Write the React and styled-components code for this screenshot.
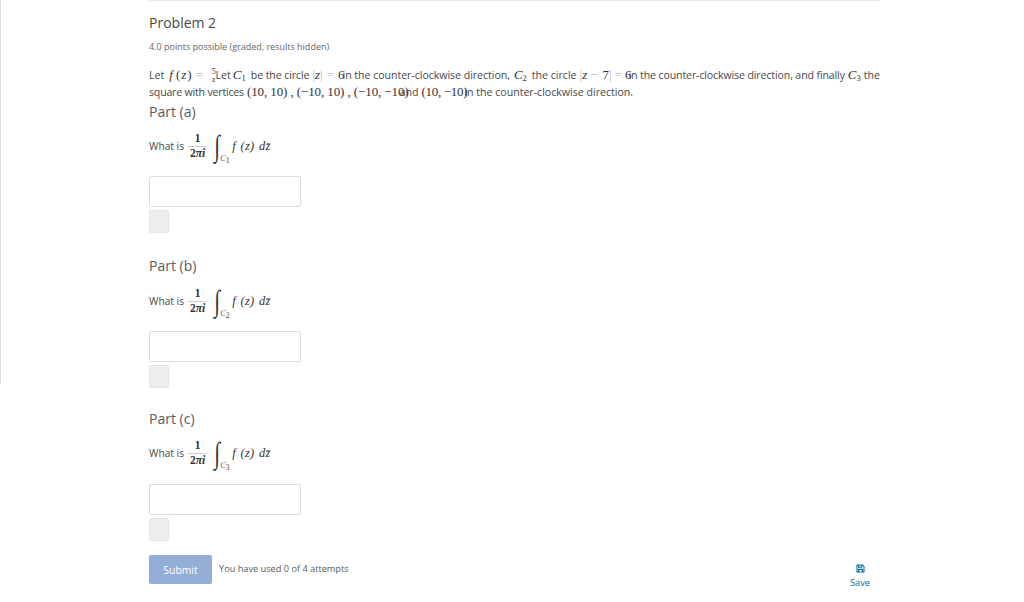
import React from "react";
import styled, { createGlobalStyle } from "styled-components";

const Global = createGlobalStyle`
  html, body { margin: 0; padding: 0; background: #fff; }
  body { font-family: "Open Sans", "Liberation Sans", sans-serif; color: #414141; }
`;
const SideRule = styled.div`
  position: absolute; left: 0; top: 0; width: 1px; height: 384px; background: #ddd;
`;
const Page = styled.main`
  width: 731px; margin-left: 149px; height: 602px; border-top: 1px solid #e6e6e6; box-sizing: border-box;
  position: relative;
`;
const Title = styled.h2`
  margin: 12px 0 0; font-size: 14px; line-height: 20px; font-weight: 400; color: #484848;
`;
const Points = styled.div`
  margin-top: 7px; font-size: 9px; line-height: 14px; color: #666;
`;
const Statement = styled.div`
  margin-top: 12px; font-size: 10.6px; line-height: 17px; color: #484848;
`;
const Line = styled.div`
  white-space: nowrap; height: 17px; display: flex; align-items: baseline;
`;
const M = styled.span`
  font-family: "Liberation Serif", "DejaVu Serif", serif;
  font-size: 13px; color: #333;
  font-style: ${p => (p.$i ? "italic" : "normal")};
  margin-left: ${p => p.$l || 0}px;
  margin-right: ${p => p.$r || 0}px;
  letter-spacing: ${p => p.$s || 0}px;
  ${p => p.$light && "color:#b5b5b5;"}
`;
const T = styled.span`
  margin-left: ${p => p.$l || 0}px;
  letter-spacing: ${p => p.$s || 0}px;
`;
const Sub = styled.sub`
  font-size: 8.5px; line-height: 0; font-style: normal; vertical-align: -2px;
`;
const TinyFrac = styled.span`
  display: inline-flex; flex-direction: column; align-items: center; width: 8px;
  font-family: "Liberation Serif", serif; font-size: 8px; line-height: 8px; color: #333;
  transform: translateY(-5px); margin-left: 8px; margin-right: -1px;
`;
const PartTitle = styled.h3`
  margin: ${p => p.$mt}px 0 0; font-size: 14px; line-height: 20px; font-weight: 400; color: #5b5b5b;
`;
const Question = styled.div`
  margin-top: ${p => p.$mt || 13}px; display: flex; align-items: center; height: 34px;
  font-size: 10.2px; color: #484848;
`;
const Frac = styled.span`
  display: inline-flex; flex-direction: column; align-items: center; margin-left: 4px; width: 19px;
  font-family: "Liberation Serif", serif; font-size: 11.5px; line-height: 13px; color: #333; font-weight: 700;
`;
const Num = styled.span`
  border-bottom: 1px solid #ccc; width: 100%; text-align: center; padding-bottom: 1px;
`;
const Pi = styled.span`
  font-style: italic;
`;
const Integral = styled.span`
  display: inline-block; transform: scaleX(0.7);
  font-family: "Liberation Serif", serif; font-size: 30px; line-height: 30px; margin-left: 6px; color: #333;
  font-weight: 400;
`;
const Bound = styled.span`
  font-family: "Liberation Serif", serif; font-style: italic; font-size: 8px; color: #555;
  align-self: flex-end; margin-left: -1px; width: 12px;
`;
const Integrand = styled.span`
  font-family: "Liberation Serif", serif; font-style: italic; font-size: 12.5px; color: #333;
  font-weight: 400; word-spacing: 1px; letter-spacing: 0.3px;
`;
const Input = styled.input`
  display: block; box-sizing: border-box; width: 152px; height: 31px; margin-top: ${p => p.$mt || 14}px;
  border: 1px solid #ddd; border-radius: 2px; background: #fff; padding: 0; outline: none;
`;
const Square = styled.div`
  width: 20px; height: 23px; margin-top: 3px; background: #eee; border: 1px solid #e6e6e6;
  border-radius: 2px; box-sizing: border-box;
`;
const Actions = styled.div`
  margin-top: 14px; display: flex; align-items: center; position: relative;
`;
const Submit = styled.button`
  width: 63px; height: 29px; border: 0; border-radius: 2px; background: #94add6; color: #fff;
  font-family: "Open Sans", sans-serif; font-size: 10.4px; padding: 0;
`;
const Attempts = styled.span`
  margin-left: 7px; font-size: 9.2px; color: #5a5a5a; position: relative; top: -1px;
`;
const SaveBtn = styled.div`
  margin-left: auto; width: 40px; display: flex; flex-direction: column; align-items: center;
  color: #0b6a9e; font-size: 9.2px; line-height: 13px; position: relative; top: 7px;
  svg { display: block; margin-bottom: 3px; }
`;

function Part({ title, mt, qmt, sub, inputMt }) {
  return (
    <>
      <PartTitle $mt={mt}>{title}</PartTitle>
      <Question $mt={qmt}>
        What is
        <Frac><Num>1</Num><span>2<Pi>πi</Pi></span></Frac>
        <Integral>∫</Integral>
        <Bound>C<Sub>{sub}</Sub></Bound>
        <Integrand>f (z) dz̄</Integrand>
      </Question>
      <Input $mt={inputMt} aria-label="answer" />
      <Square />
    </>
  );
}

export default function App() {
  return (
    <>
      <Global />
      <SideRule />
      <Page>
        <Title>Problem 2</Title>
        <Points>4.0 points possible (graded, results hidden)</Points>
        <Statement>
          <Line>
            <T>Let</T>
            <M $l={5} $i>f</M><M $l={3}>(</M><M $i $l={1}>z</M><M $l={1}>)</M>
            <M $l={4} $light>=</M>
            <TinyFrac><span>5</span><span>z</span></TinyFrac>
            <T>Let</T>
            <M $l={2} $i>C<Sub>1</Sub></M>
            <T $l={5} $s={-0.1}>be the circle</T>
            <M $l={3} $light>|</M><M $i>z</M><M $light>|</M>
            <M $l={4} $light>=</M>
            <M $l={4} $r={-2}>6</M>
            <T $s={-0.04}>in the counter-clockwise direction,</T>
            <M $l={4} $i>C<Sub>2</Sub></M>
            <T $l={5}>the circle</T>
            <M $l={3} $light>|</M><M $i>z</M>
            <M $l={3} $light>−</M>
            <M $l={5}>7</M><M $light>|</M>
            <M $l={3} $light>=</M>
            <M $l={3} $r={-3}>6</M>
            <T $s={-0.13}>in the counter-clockwise direction, and finally</T>
            <M $l={3} $i>C<Sub>3</Sub></M>
            <T $l={3}>the</T>
          </Line>
          <Line>
            <T $s={-0.2}>square with vertices</T>
            <M $l={3} $s={-0.1}>(10, 10) , (−10, 10) , (−10, −10)</M>
            <T $l={-9}>and</T>
            <M $l={3} $s={-0.3}>(10, −10)</M>
            <T $l={-3}>in the counter-clockwise direction.</T>
          </Line>
        </Statement>
        <Part title="Part (a)" mt={2} qmt={7} sub="1" inputMt={13} />
        <Part title="Part (b)" mt={23} qmt={8} sub="2" inputMt={13} />
        <Part title="Part (c)" mt={21} qmt={7} sub="3" inputMt={14} />
        <Actions>
          <Submit>Submit</Submit>
          <Attempts>You have used 0 of 4 attempts</Attempts>
          <SaveBtn>
            <svg width="9" height="9" viewBox="0 0 9 9" fill="none" stroke="#0b6a9e" strokeWidth="1.1">
              <path d="M1 1h5.5L8 2.5V8H1z" /><path d="M2.6 1v2.2h3V1M2.6 8V5.4h3.8V8" />
            </svg>
            Save
          </SaveBtn>
        </Actions>
      </Page>
    </>
  );
}
